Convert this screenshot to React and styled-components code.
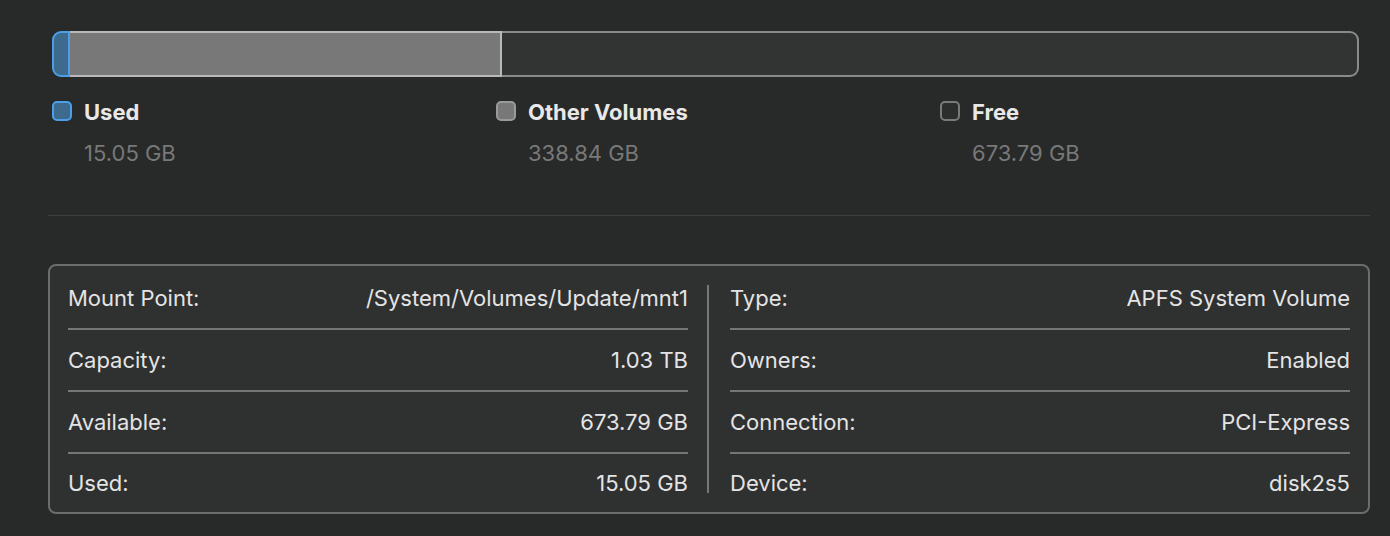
import styled, { createGlobalStyle } from 'styled-components';

const GlobalStyle = createGlobalStyle`
  html, body {
    margin: 0;
    padding: 0;
    background: #282929;
  }
  body {
    font-family: Inter, "Noto Sans", "Liberation Sans", sans-serif;
    color: #e4e4e4;
  }
`;

const Page = styled.div`
  width: 1390px;
  height: 536px;
  box-sizing: border-box;
  padding: 31px 20px 0 48px;
  overflow: hidden;
`;

const Bar = styled.div`
  display: flex;
  height: 46px;
  margin: 0 11px 0 4px;
`;

const Segment = styled.div`
  box-sizing: border-box;
  height: 100%;
  flex: ${p => (p.$grow ? '1 1 auto' : '0 0 auto')};
  width: ${p => p.$width || 'auto'};
  background: ${p => p.$fill};
  border: 2px solid ${p => p.$line};
  ${p => p.$first && 'border-radius: 9px 0 0 9px;'}
  ${p => p.$middle && 'border-left: none;'}
  ${p => p.$last && 'border-radius: 0 9px 9px 0; border-left: none;'}
`;

const Legend = styled.div`
  display: grid;
  grid-template-columns: 444px 444px 1fr;
  margin: 23px 0 0 4px;
`;

const LegendItem = styled.div`
  display: grid;
  grid-template-columns: 20px auto;
  column-gap: 12px;
  align-items: center;
`;

const Swatch = styled.span`
  box-sizing: border-box;
  width: 20px;
  height: 20px;
  border-radius: 5px;
  background: ${p => p.$fill};
  border: 2px solid ${p => p.$line};
`;

const LegendLabel = styled.span`
  font-size: 22px;
  font-weight: 700;
  line-height: 22px;
  color: #e8e8e8;
  transform: translateY(1px);
`;

const LegendValue = styled.span`
  grid-column: 2;
  margin-top: 18px;
  font-size: 22px;
  line-height: 26px;
  color: #787878;
`;

const Rule = styled.div`
  height: 1px;
  background: #3e3e3e;
  margin-top: 49px;
`;

const InfoBox = styled.div`
  margin-top: 48px;
  box-sizing: border-box;
  border: 2px solid #6c6c6c;
  border-radius: 8px;
  background: #2f3030;
  padding: 2px 18px 0;
  display: grid;
  grid-template-columns: 620px 2px 620px;
  column-gap: 19px;
`;

const Column = styled.div`
  display: flex;
  flex-direction: column;
  width: 620px;
  margin-left: ${p => p.$shift || '0'};
`;

const VLine = styled.div`
  background: #777;
  margin: 17px 0 19px;
`;

const Row = styled.div`
  display: flex;
  justify-content: space-between;
  align-items: center;
  height: ${p => (p.$last ? '58px' : '60px')};
  font-size: 22px;
  color: #e4e4e4;
  border-bottom: ${p => (p.$last ? 'none' : '2px solid #767676')};
`;

const left = [
  ['Mount Point:', '/System/Volumes/Update/mnt1'],
  ['Capacity:', '1.03 TB'],
  ['Available:', '673.79 GB'],
  ['Used:', '15.05 GB'],
];

const right = [
  ['Type:', 'APFS System Volume'],
  ['Owners:', 'Enabled'],
  ['Connection:', 'PCI-Express'],
  ['Device:', 'disk2s5'],
];

const legend = [
  { label: 'Used', value: '15.05 GB', fill: '#3e6a8d', line: '#4a9fe8' },
  { label: 'Other Volumes', value: '338.84 GB', fill: '#777877', line: '#9a9a9a' },
  { label: 'Free', value: '673.79 GB', fill: '#2c2d2d', line: '#7a7a7a' },
];

function InfoColumn({ rows, shift }) {
  return (
    <Column $shift={shift}>
      {rows.map(([k, v], i) => (
        <Row key={k} $last={i === rows.length - 1}>
          <span>{k}</span>
          <span>{v}</span>
        </Row>
      ))}
    </Column>
  );
}

export default function App() {
  return (
    <>
      <GlobalStyle />
      <Page>
        <Bar>
          <Segment $first $width="18px" $fill="#3e6a8d" $line="#4a9fe8" />
          <Segment $middle $width="432px" $fill="#777877" $line="#b9b9b9" />
          <Segment $last $grow $fill="#323333" $line="#8a8a8a" />
        </Bar>
        <Legend>
          {legend.map(item => (
            <LegendItem key={item.label}>
              <Swatch $fill={item.fill} $line={item.line} />
              <LegendLabel>{item.label}</LegendLabel>
              <LegendValue>{item.value}</LegendValue>
            </LegendItem>
          ))}
        </Legend>
        <Rule />
        <InfoBox>
          <InfoColumn rows={left} />
          <VLine />
          <InfoColumn rows={right} shift="2px" />
        </InfoBox>
      </Page>
    </>
  );
}
